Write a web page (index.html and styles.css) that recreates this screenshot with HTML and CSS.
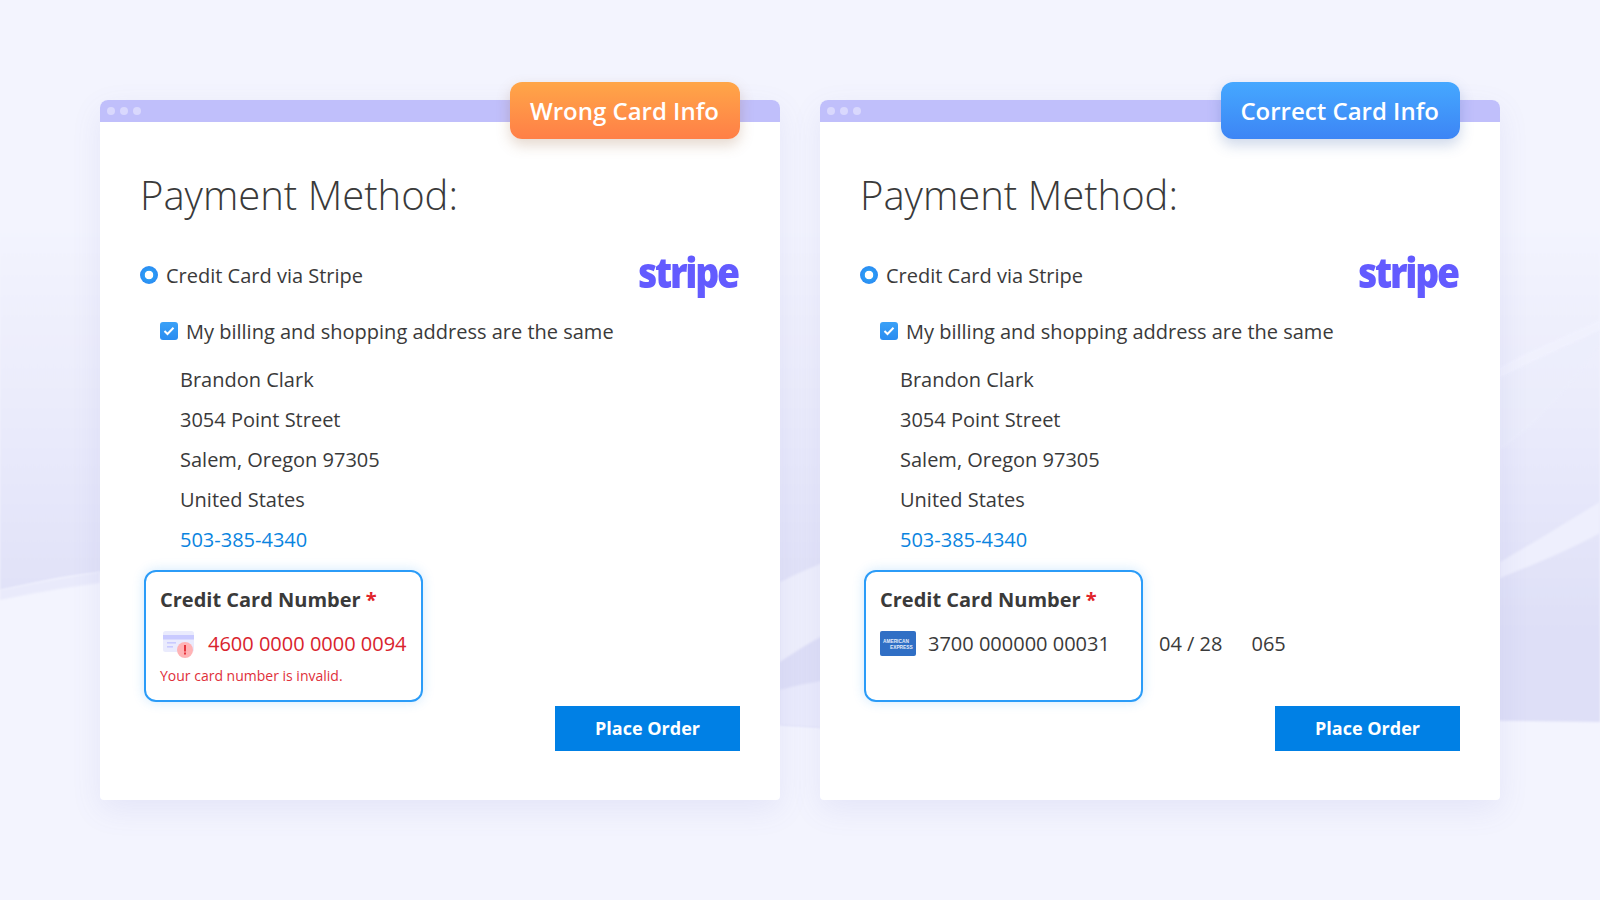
FILE: index.html
```html
<!DOCTYPE html>
<html lang="en">
<head>
    <meta charset="UTF-8">
    <meta name="viewport" content="width=device-width, initial-scale=1.0">
    <title>Payment Method</title>
    <link rel="stylesheet" href="styles.css">
</head>
<body>
    <!-- Background waves -->
    <svg class="waves" width="1600" height="900" viewBox="0 0 1600 900" aria-hidden="true">
        <defs>
            <linearGradient id="waveFill" gradientUnits="userSpaceOnUse" x1="0" y1="230" x2="0" y2="640">
                <stop offset="0" stop-color="#f3f4fe"/>
                <stop offset="0.5" stop-color="#e9eafb"/>
                <stop offset="1" stop-color="#dedff7"/>
            </linearGradient>
            <filter id="soft" x="-10%" y="-10%" width="120%" height="120%"><feGaussianBlur stdDeviation="1"/></filter>
        </defs>
        <path fill="url(#waveFill)" filter="url(#soft)" d="M0 200 H1600 V722 C1300 716 1000 735 830 728 L780 725 C600 660 250 560 100 572 C60 576 30 584 0 590 Z"/>
        <path fill="#e9eafb" filter="url(#soft)" d="M0 590 C30 584 60 578 100 572 L100 583 C60 588 30 594 0 600 Z"/>
        <path fill="#eaebfc" filter="url(#soft)" d="M780 690 C800 684 815 682 830 680 L830 728 L780 725 Z"/>
        <path fill="#eeeffc" filter="url(#soft)" d="M780 582 C800 572 815 566 830 560 L830 632 C810 642 795 652 780 662 Z"/>
        <path fill="#eeeffd" filter="url(#soft)" d="M1500 562 C1530 545 1570 520 1600 502 L1600 533 C1570 550 1530 566 1500 578 Z"/>
        <path fill="#f1f2fe" opacity="0.9" filter="url(#soft)" d="M1500 368 C1530 350 1570 335 1600 320 L1600 330 C1570 345 1530 362 1500 378 Z"/>
        <path fill="#eceefc" opacity="0.6" filter="url(#soft)" d="M1500 378 C1530 362 1570 345 1600 330 L1600 345 C1560 400 1530 430 1500 450 Z"/>
    </svg>

    <main class="page">
        <section class="card">
            <div class="titlebar">
                <span class="dot"></span><span class="dot"></span><span class="dot"></span>
            </div>
            <div class="badge badge-wrong">Wrong Card Info</div>
            <div class="card-body">
                <h1>Payment Method:</h1>
                <div class="method">
                    <span class="radio"></span>
                    <span class="method-name">Credit Card via Stripe</span>
                    <span class="stripe">stripe</span>
                </div>
                <div class="same">
                    <span class="check">
                        <svg width="12" height="10" viewBox="0 0 12 10"><path d="M1.5 5 L4.5 8 L10.5 1.8" fill="none" stroke="#fff" stroke-width="2"/></svg>
                    </span>
                    My billing and shopping address are the same
                </div>
                <div class="address">
                    <p>Brandon Clark</p>
                    <p>3054 Point Street</p>
                    <p>Salem, Oregon 97305</p>
                    <p>United States</p>
                    <p class="phone">503-385-4340</p>
                </div>
                <div class="card-row">
                    <div class="number-box">
                        <div class="number-label">Credit Card Number <span class="req">*</span></div>
                        <div class="number-row">
                            <svg class="card-icon card-icon-bad" width="32" height="28" viewBox="0 0 32 28">
                                <rect x="0" y="1" width="31" height="21" rx="2.5" fill="#eaebfd"/>
                                <rect x="0" y="5" width="31" height="4.5" fill="#c9caff"/>
                                <rect x="4" y="12" width="9" height="1.6" fill="#c9caff"/>
                                <rect x="4" y="16" width="6" height="1.6" fill="#c9caff"/>
                                <circle cx="22" cy="20" r="8" fill="#ffb3b5"/>
                                <rect x="21" y="15" width="2" height="6.5" fill="#e5343d"/>
                                <rect x="21" y="22.5" width="2" height="2" fill="#e5343d"/>
                            </svg>
                            <span class="number number-bad">4600 0000 0000 0094</span>
                        </div>
                        <div class="error">Your card number is invalid.</div>
                    </div>
                </div>
                <div class="actions"><button class="order">Place Order</button></div>
            </div>
        </section>

        <section class="card">
            <div class="titlebar">
                <span class="dot"></span><span class="dot"></span><span class="dot"></span>
            </div>
            <div class="badge badge-right">Correct Card Info</div>
            <div class="card-body">
                <h1>Payment Method:</h1>
                <div class="method">
                    <span class="radio"></span>
                    <span class="method-name">Credit Card via Stripe</span>
                    <span class="stripe">stripe</span>
                </div>
                <div class="same">
                    <span class="check">
                        <svg width="12" height="10" viewBox="0 0 12 10"><path d="M1.5 5 L4.5 8 L10.5 1.8" fill="none" stroke="#fff" stroke-width="2"/></svg>
                    </span>
                    My billing and shopping address are the same
                </div>
                <div class="address">
                    <p>Brandon Clark</p>
                    <p>3054 Point Street</p>
                    <p>Salem, Oregon 97305</p>
                    <p>United States</p>
                    <p class="phone">503-385-4340</p>
                </div>
                <div class="card-row">
                    <div class="number-box">
                        <div class="number-label">Credit Card Number <span class="req">*</span></div>
                        <div class="number-row">
                            <svg class="card-icon" width="36" height="25" viewBox="0 0 36 25">
                                <rect width="36" height="25" rx="2" fill="#306fc5"/>
                                <text x="3" y="11.5" class="amex">AMERICAN</text>
                                <text x="10" y="17.5" class="amex">EXPRESS</text>
                            </svg>
                            <span class="number">3700 000000 00031</span>
                        </div>
                    </div>
                    <span class="expiry">04 / 28</span>
                    <span class="cvc">065</span>
                </div>
                <div class="actions"><button class="order">Place Order</button></div>
            </div>
        </section>
    </main>
</body>
</html>
```

FILE: styles.css
```css
html, body { margin: 0; padding: 0; }
body {
    width: 1600px;
    height: 900px;
    overflow: hidden;
    position: relative;
    background: #f3f4fe;
    font-family: "Open Sans", Arial, sans-serif;
    color: #3a3a3a;
}
.waves { position: absolute; left: 0; top: 0; }
.page {
    position: relative;
    display: flex;
    gap: 40px;
    padding: 100px;
}
.card {
    position: relative;
    width: 680px;
    height: 700px;
    background: white;
    border-radius: 8px 8px 4px 4px;
    box-shadow: 0 10px 30px rgba(110,110,200,0.10);
}
.titlebar {
    height: 22px;
    background: #c0bffb;
    border-radius: 8px 8px 0 0;
    display: flex;
    align-items: center;
    gap: 5px;
    padding-left: 7px;
}
.dot {
    width: 8px;
    height: 8px;
    border-radius: 50%;
    background: #d9d8fd;
}
.badge {
    position: absolute;
    top: -18px;
    right: 40px;
    height: 57px;
    line-height: 57px;
    border-radius: 12px;
    color: white;
    font-size: 24px;
    font-weight: 600;
    white-space: nowrap;
}
.badge-wrong {
    padding: 0 21px 0 20px;
    background: linear-gradient(180deg, #ffa648, #ff7f47);
    box-shadow: 0 6px 14px rgba(150,100,60,0.25);
}
.badge-right {
    padding: 0 21px 0 19px;
    background: linear-gradient(180deg, #45a8ff, #3d85f5);
    box-shadow: 0 6px 14px rgba(60,100,170,0.25);
}
.card-body { padding: 0 40px; }
h1 {
    margin: 44px 0 0;
    font-size: 40px;
    font-weight: 300;
    line-height: 57px;
    color: #3a3a3a;
}
.method {
    display: flex;
    align-items: center;
    height: 50px;
    margin-top: 27px;
    font-size: 20px;
}
.radio {
    box-sizing: border-box;
    width: 18px;
    height: 18px;
    border-radius: 50%;
    background: radial-gradient(circle at center, white 0 4px, #2a9bf5 4.6px, #2c7ff0 100%);
    margin-right: 8px;
}
.stripe {
    margin: -7px 2px 0 auto;
    font-size: 43px;
    font-weight: 800;
    letter-spacing: -2.6px;
    color: #635bff;
    line-height: 50px;
    transform: scaleX(0.87);
    transform-origin: right center;
}
.same {
    display: flex;
    align-items: center;
    height: 40px;
    margin: 11px 0 0 20px;
    font-size: 20px;
}
.check {
    width: 18px;
    height: 18px;
    border-radius: 3px;
    background: linear-gradient(180deg, #3ba1f7, #2a8cf0);
    display: flex;
    align-items: center;
    justify-content: center;
    margin-right: 8px;
}
.address { margin: 9px 0 0 40px; font-size: 20px; }
.address p { margin: 0; height: 40px; line-height: 40px; }
.address .phone { color: #0a84e0; }
.card-row {
    display: flex;
    align-items: center;
    margin: 10px 0 0 4px;
    font-size: 20px;
}
.number-box {
    box-sizing: border-box;
    width: 279px;
    height: 132px;
    padding: 14px 14px 0;
    border: 2px solid #2b9cf8;
    border-radius: 12px;
    box-shadow: 0 0 12px rgba(43,156,248,0.22);
}
.number-label { font-weight: 700; line-height: 28px; }
.req { color: #e0242c; }
.number-row {
    display: flex;
    align-items: center;
    gap: 12px;
    height: 30px;
    margin-top: 14px;
}
.number-row .card-icon { flex: none; }
.number-row .card-icon-bad { margin: 2px 1px 0 3px; }
.amex {
    font-family: "Liberation Sans", Arial, sans-serif;
    font-size: 4.8px;
    font-weight: 700;
    fill: #e4edfa;
}
.number { white-space: nowrap; }
.number-bad { color: #d9232d; }
.error { font-size: 14px; color: #e0303a; margin-top: 8px; }
.expiry { margin: 0 29px 0 16px; }
.card-row .expiry, .card-row .cvc { position: relative; top: 7px; }
.actions { display: flex; justify-content: flex-end; margin-top: 4px; }
.order {
    width: 185px;
    height: 45px;
    padding: 0 0 2px;
    border: 0;
    background: #0080e5;
    color: white;
    font-family: "Open Sans", Arial, sans-serif;
    font-size: 18px;
    font-weight: 700;
}
```
